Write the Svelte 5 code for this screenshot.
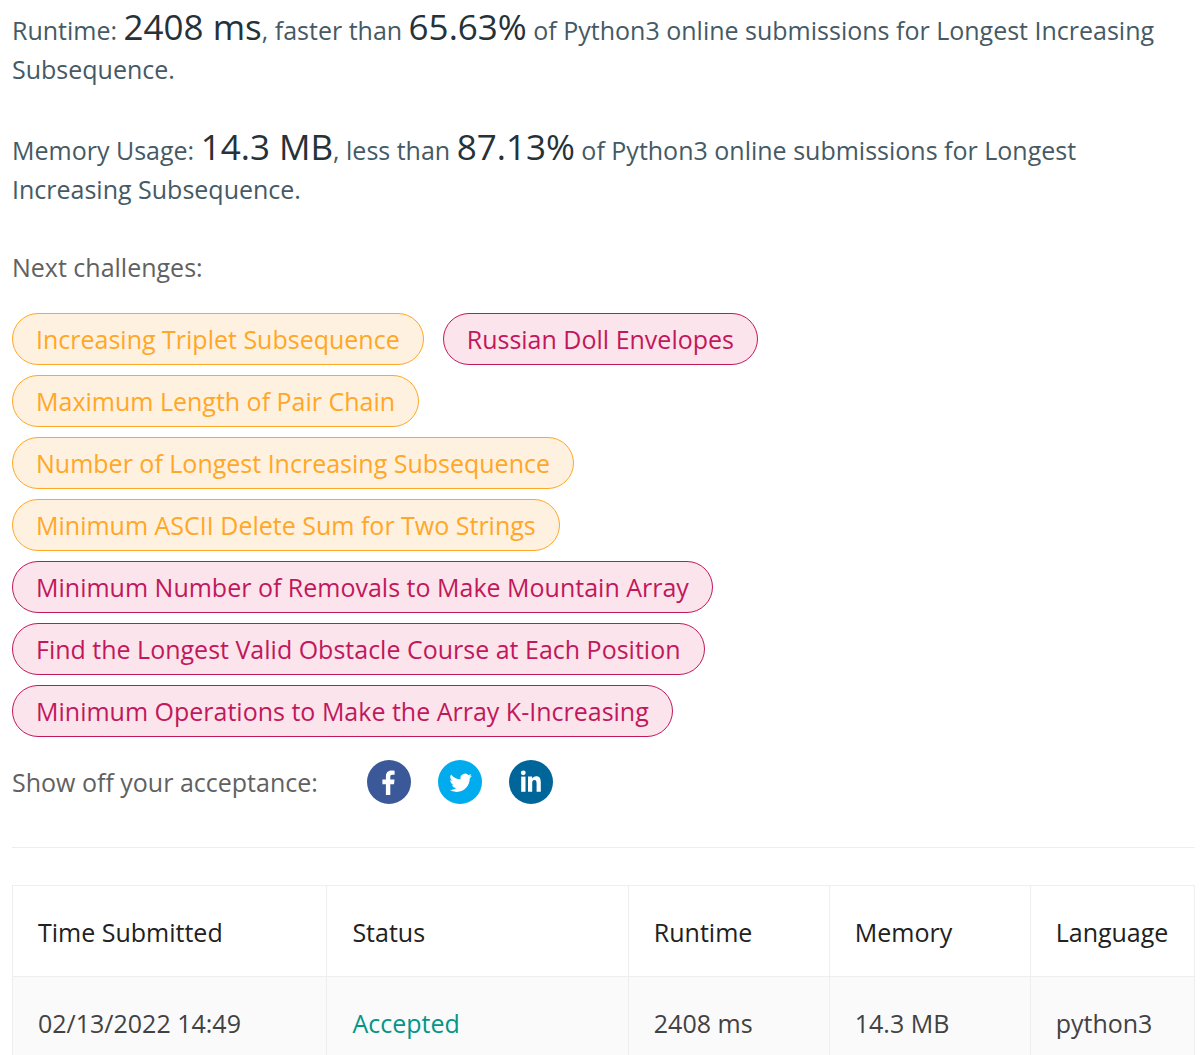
<script lang="ts">
  type Level = 'medium' | 'hard';

  const problem = 'Longest Increasing Subsequence';

  const challenges: { title: string; level: Level }[] = [
    { title: 'Increasing Triplet Subsequence', level: 'medium' },
    { title: 'Russian Doll Envelopes', level: 'hard' },
    { title: 'Maximum Length of Pair Chain', level: 'medium' },
    { title: 'Number of Longest Increasing Subsequence', level: 'medium' },
    { title: 'Minimum ASCII Delete Sum for Two Strings', level: 'medium' },
    { title: 'Minimum Number of Removals to Make Mountain Array', level: 'hard' },
    { title: 'Find the Longest Valid Obstacle Course at Each Position', level: 'hard' },
    { title: 'Minimum Operations to Make the Array K-Increasing', level: 'hard' },
  ];

  const submissions = [
    { time: '02/13/2022 14:49', status: 'Accepted', runtime: '2408 ms', memory: '14.3 MB', language: 'python3' },
  ];
</script>

<main>
  <p class="stat">
    Runtime: <strong>2408 ms</strong>, faster than <strong>65.63%</strong> of Python3 online submissions for {problem}.
  </p>
  <p class="stat">
    Memory Usage: <strong>14.3 MB</strong>, less than <strong>87.13%</strong> of Python3 online submissions for {problem}.
  </p>

  <h2>Next challenges:</h2>
  <div class="challenges">
    {#each challenges as { title, level }}
      <a class="chip {level}" href="#challenge">{title}</a>
    {/each}
  </div>

  <div class="share">
    <span>Show off your acceptance:</span>
    <div class="icons">
      <a href="#facebook" aria-label="Facebook">
        <svg viewBox="0 0 44 44">
          <circle cx="22" cy="22" r="22" fill="#3b5998" />
          <path fill="#fff" d="M18.9 35V24.3h-3.5v-4.7h3.5v-3.2c0-3.7 2.1-5.9 5.5-5.9 1.5 0 2.8.1 3.2.2v4.1h-2.2c-1.8 0-2.1.8-2.1 2.1v2.7h4.2l-.5 4.7h-3.7V35z" />
        </svg>
      </a>
      <a href="#twitter" aria-label="Twitter">
        <svg viewBox="0 0 44 44">
          <circle cx="22" cy="22" r="22" fill="#00acee" />
          <g transform="translate(11.5 11.5) scale(0.94)">
            <path fill="#fff" d="M23.95 4.57a10 10 0 0 1-2.82.77 4.96 4.96 0 0 0 2.16-2.72c-.95.55-2 .96-3.13 1.18a4.92 4.92 0 0 0-8.38 4.48C7.69 8.1 4.07 6.13 1.64 3.16a4.92 4.92 0 0 0 1.52 6.57 4.9 4.9 0 0 1-2.23-.61v.06a4.92 4.92 0 0 0 3.95 4.83 5 5 0 0 1-2.21.08 4.94 4.94 0 0 0 4.6 3.42A9.87 9.87 0 0 1 0 19.54a14 14 0 0 0 7.55 2.21c9.05 0 14-7.5 14-13.98 0-.21 0-.42-.02-.63a9.94 9.94 0 0 0 2.46-2.55z" />
          </g>
        </svg>
      </a>
      <a href="#linkedin" aria-label="LinkedIn">
        <svg viewBox="0 0 44 44">
          <circle cx="22" cy="22" r="22" fill="#006699" />
          <g fill="#fff">
            <circle cx="14.3" cy="12.8" r="2.4" />
            <path d="M12.2 16.6h4.3v15.2h-4.3z" />
            <path d="M19 16.6h4.1v2c.8-1.4 2.1-2.4 4.1-2.4 3.7 0 4.6 2.7 4.6 6.4v9.2h-4.2v-8.1c0-1.9-.2-3.8-2.1-3.8-2 0-2.3 1.7-2.3 3.7v8.2H19z" />
          </g>
        </svg>
      </a>
    </div>
  </div>

  <hr />

  <table>
    <thead>
      <tr>
        <th class="time">Time Submitted</th>
        <th class="status">Status</th>
        <th class="metric">Runtime</th>
        <th class="metric">Memory</th>
        <th>Language</th>
      </tr>
    </thead>
    <tbody>
      {#each submissions as row}
        <tr>
          <td>{row.time}</td>
          <td><a class="accepted" href="#submission">{row.status}</a></td>
          <td>{row.runtime}</td>
          <td>{row.memory}</td>
          <td>{row.language}</td>
        </tr>
      {/each}
    </tbody>
  </table>
</main>

<style>
  :global(body) {
    margin: 0;
    background: #fff;
  }

  main {
    padding: 8px 8px 0 12px;
    font-family: 'Segoe UI', 'Open Sans', 'Noto Sans', sans-serif;
    font-size: 25px;
    line-height: 39px;
    color: #616161;
  }

  a {
    text-decoration: none;
  }

  .stat {
    margin: 0 0 39px;
    color: #455a64;
  }

  .stat strong {
    font-size: 35px;
    font-weight: 400;
    line-height: 38px;
    color: #263238;
  }

  h2 {
    margin: 0 0 26px;
    font-size: 25px;
    font-weight: 400;
  }

  .challenges {
    display: flex;
    flex-wrap: wrap;
    gap: 10px 19px;
    max-width: 800px;
  }

  .chip {
    padding: 6px 23px;
    border: 1px solid;
    border-radius: 26px;
    line-height: 38px;
  }

  .medium {
    color: #ffa726;
    background: #fff1df;
  }

  .hard {
    color: #c2185b;
    background: #fce4ec;
  }

  .share {
    display: flex;
    align-items: center;
    gap: 49px;
    margin-top: 23px;
  }

  .icons {
    display: flex;
    gap: 27px;
  }

  .icons a,
  .icons svg {
    display: block;
    width: 44px;
    height: 44px;
  }

  hr {
    height: 1px;
    margin: 43px 0 37px;
    border: 0;
    background: #eee;
  }

  table {
    width: 100%;
    table-layout: fixed;
    border-collapse: collapse;
  }

  th,
  td {
    box-sizing: border-box;
    padding: 27px 25px 24px;
    border: 1px solid #eee;
    font-weight: 400;
    text-align: left;
    white-space: nowrap;
  }

  th {
    color: #212121;
  }

  td {
    color: #424242;
    background: #fafafa;
  }

  .time {
    width: 26.6%;
  }

  .status {
    width: 25.5%;
  }

  .metric {
    width: 17%;
  }

  .accepted {
    color: #009688;
  }
</style>
